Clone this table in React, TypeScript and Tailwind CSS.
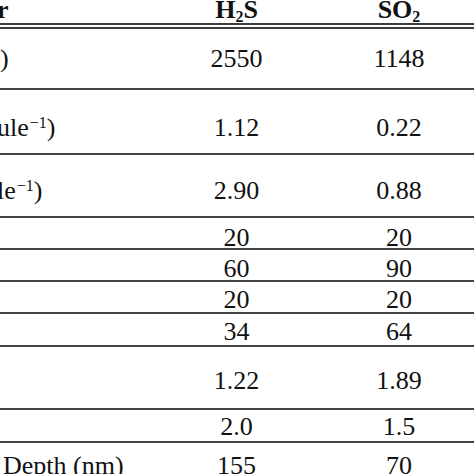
const serif = { fontFamily: '"Liberation Serif", "Times New Roman", serif' };

type Row = {
  label: React.ReactNode;
  a: string;
  b: string;
  row: string;
  pad: string;
};

const Sup = () => (
  <sup className="text-[16px] ml-[1px]">−1</sup>
);

const rows: Row[] = [
  { label: <span>)</span>, a: "2550", b: "1148", row: "h-[61px]", pad: "pt-0" },
  {
    label: (
      <span className="-ml-[3px]">
        ule<Sup />)
      </span>
    ),
    a: "1.12",
    b: "0.22",
    row: "h-[65px]",
    pad: "pt-[12px]",
  },
  {
    label: (
      <span className="-ml-[3px]">
        le<Sup />)
      </span>
    ),
    a: "2.90",
    b: "0.88",
    row: "h-[63px]",
    pad: "pt-[10px]",
  },
  { label: "", a: "20", b: "20", row: "h-[32px]", pad: "pt-[7px]" },
  { label: "", a: "60", b: "90", row: "h-[32px]", pad: "pt-[6px]" },
  { label: "", a: "20", b: "20", row: "h-[32px]", pad: "pt-[5px]" },
  { label: "", a: "34", b: "64", row: "h-[33px]", pad: "pt-[4px]" },
  { label: "", a: "1.22", b: "1.89", row: "h-[63px]", pad: "pt-[6px]" },
  { label: "", a: "2.0", b: "1.5", row: "h-[33px]", pad: "pt-[3px]" },
];

export default function App() {
  return (
    <div
      className="w-[474px] h-[474px] overflow-hidden bg-white text-[#111] text-[26px] leading-none"
      style={serif}
    >
      {/* header */}
      <div className="grid grid-cols-[163px_147px_1fr] h-[29px] border-b-[6px] border-double border-[#3c3c3c] font-bold">
        <div className="overflow-hidden whitespace-nowrap -mt-[3px]">
          <span className="block -ml-[3px]">r</span>
        </div>
        <div className="text-center -mt-[3px]">
          H<sub className="text-[16px]">2</sub>S
        </div>
        <div className="text-center pl-[14px] -mt-[3px]">
          SO<sub className="text-[16px]">2</sub>
        </div>
      </div>

      {rows.map((r, i) => (
        <div
          key={i}
          className={`grid grid-cols-[163px_147px_1fr] items-center border-b-2 border-[#444] ${r.row}`}
        >
          <div className={`overflow-hidden whitespace-nowrap ${r.pad}`}>{r.label}</div>
          <div className={`text-center ${r.pad}`}>{r.a}</div>
          <div className={`text-center pl-[14px] ${r.pad}`}>{r.b}</div>
        </div>
      ))}

      <div className="grid grid-cols-[163px_147px_1fr] items-center h-[46px]">
        <div className="overflow-hidden whitespace-nowrap pl-[3px]">Depth (nm)</div>
        <div className="text-center">155</div>
        <div className="text-center pl-[14px]">70</div>
      </div>
    </div>
  );
}
